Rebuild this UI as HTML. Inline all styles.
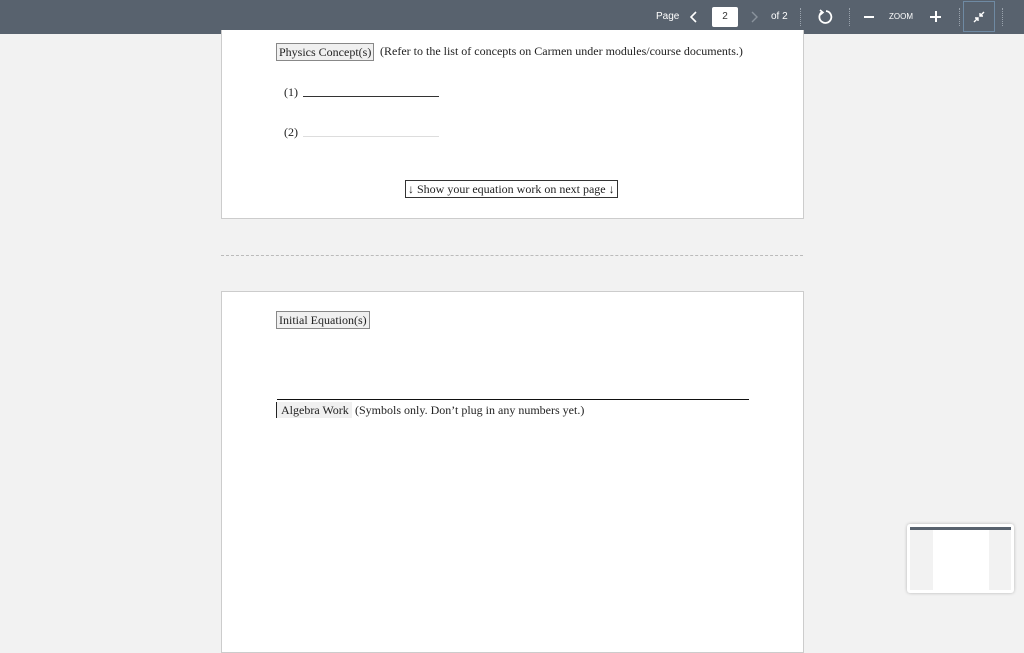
<!DOCTYPE html>
<html><head><style>
body{margin:0;width:1024px;height:640px;overflow:hidden;background:#f2f2f2;position:relative;font-family:"Liberation Serif",serif;}
.tb{position:absolute;left:0;top:0;width:1024px;height:34px;background:#58626e;color:#fff;font-family:"Liberation Sans",sans-serif;}
.tb span{position:absolute;}
.sep{position:absolute;top:8px;height:18px;border-left:1px dotted #9aa3ad;}
.pg{position:absolute;background:#fff;border:1px solid #ccc;left:221px;width:581px;}
.t{position:absolute;font-size:12px;color:#222;white-space:nowrap;}
.box{position:absolute;border:1px solid #888;background:#f0f0f0;font-size:12px;padding:0 2px;line-height:16px;color:#222;white-space:nowrap;}
</style></head><body>
<div class="tb">
<span style="left:656px;top:11px;font-size:10px;">Page</span>
<svg style="position:absolute;left:690px;top:11px" width="8" height="12"><path d="M6 1 L1 6 L6 11" stroke="#fff" stroke-width="1.6" fill="none"/></svg>
<div style="position:absolute;left:712px;top:7px;width:26px;height:20px;background:#fff;border-radius:2px;color:#333;font-size:10px;text-align:center;line-height:20px;">2</div>
<svg style="position:absolute;left:750px;top:11px" width="8" height="12"><path d="M2 1 L7 6 L2 11" stroke="#8a939d" stroke-width="1.4" fill="none"/></svg>
<span style="left:771px;top:11px;font-size:10px;">of 2</span>
<div class="sep" style="left:800px"></div>
<svg style="position:absolute;left:817px;top:9px" width="16" height="16"><path d="M5 3 A6 6 0 1 0 9 2" stroke="#fff" stroke-width="1.8" fill="none"/><path d="M3 1 L6 3.5 L3 6" stroke="#fff" stroke-width="1.6" fill="none"/></svg>
<div class="sep" style="left:849px"></div>
<div style="position:absolute;left:864px;top:16px;width:10px;height:2px;background:#fff"></div>
<span style="left:889px;top:12px;font-size:8px;">ZOOM</span>
<div style="position:absolute;left:930px;top:16px;width:11px;height:2px;background:#fff"></div>
<div style="position:absolute;left:934.5px;top:11px;width:2px;height:11px;background:#fff"></div>
<div class="sep" style="left:959px"></div>
<div style="position:absolute;left:963px;top:1px;width:32px;height:31px;border:1px solid #6f8aa3;box-sizing:border-box"></div>
<svg style="position:absolute;left:973px;top:11px" width="12" height="12"><path d="M1 11 L5 7 M2 7 H5 V10 M11 1 L7 5 M7 2 V5 H10" stroke="#fff" stroke-width="1.4" fill="none"/></svg>
<div class="sep" style="left:1002px"></div>
</div>

<div class="pg" style="top:30px;height:188px;border-top:none"></div>
<div class="box" style="left:276px;top:43px;">Physics Concept(s)</div>
<div class="t" style="left:380px;top:44px;">(Refer to the list of concepts on Carmen under modules/course documents.)</div>
<div class="t" style="left:284px;top:85px;">(1)</div>
<div style="position:absolute;left:303px;top:96px;width:136px;border-top:1px solid #333"></div>
<div class="t" style="left:284px;top:125px;">(2)</div>
<div style="position:absolute;left:303px;top:136px;width:136px;border-top:1px solid #ddd"></div>
<div class="box" style="left:405px;top:180px;background:#fff;border-color:#333;">↓ Show your equation work on next page ↓</div>

<div style="position:absolute;left:221px;top:255px;width:582px;border-top:1px dashed #bbb"></div>

<div class="pg" style="top:291px;height:360px;"></div>
<div class="box" style="left:276px;top:311px;">Initial Equation(s)</div>
<div style="position:absolute;left:277px;top:399px;width:472px;border-top:1px solid #111"></div>
<div class="box" style="left:276px;top:402px;border-top:none;border-right:none;border-bottom:none;border-left:1px solid #222;padding:0 3px 0 4px">Algebra Work</div>
<div class="t" style="left:355px;top:403px;">(Symbols only. Don’t plug in any numbers yet.)</div>

<div style="position:absolute;left:907px;top:524px;width:107px;height:69px;background:#fff;border-radius:3px;box-shadow:0 0 3px rgba(0,0,0,.25)">
<div style="position:absolute;left:3px;top:3px;width:101px;height:63px;background:#f2f2f2"></div>
<div style="position:absolute;left:3px;top:3px;width:101px;height:3px;background:#58626e"></div>
<div style="position:absolute;left:26px;top:6px;width:56px;height:60px;background:#fff"></div>
</div>
</body></html>
